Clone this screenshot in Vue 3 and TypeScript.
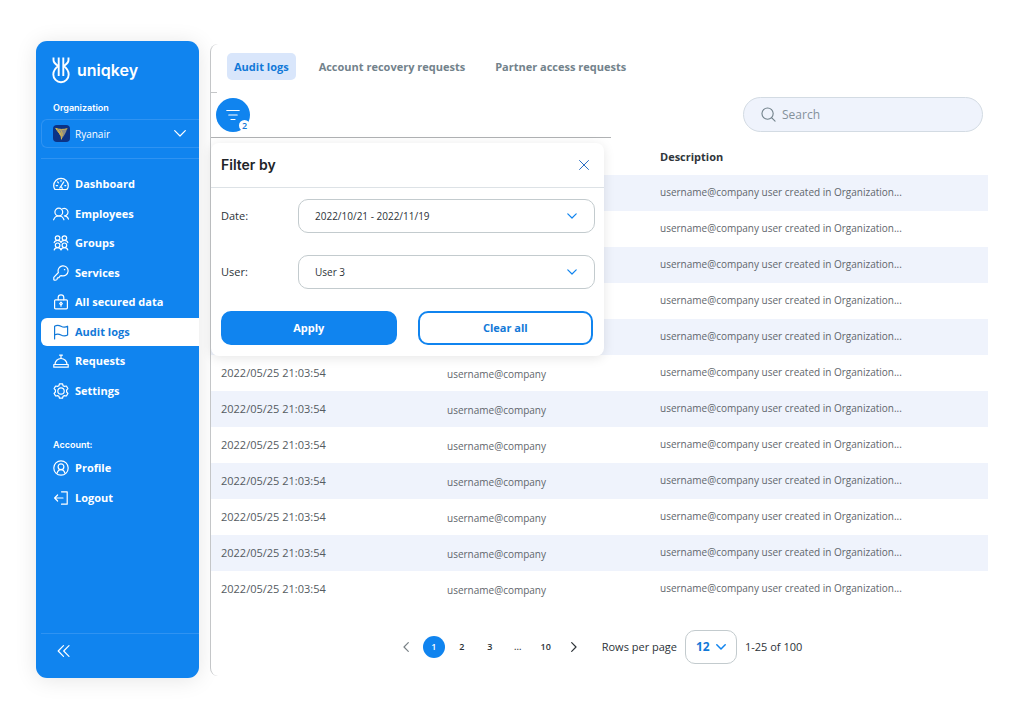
<script setup lang="ts">
import { ref } from 'vue'

interface MenuItem {
  label: string
  icon: string[]
}

interface LogRow {
  date: string
  user: string
  description: string
}

const menu: MenuItem[] = [
  {
    label: 'Dashboard',
    icon: [
      'M2 13.500C1.100 12.400.7 11.100.7 9.700a7.300 7.300 0 0 1 14.600 0c0 1.400-.4 2.700-1.300 3.800z',
      'M6.800 12 10.800 5.800M9.200 13.300c.2-1 0-1.800-.8-2.300M3.200 9.600h1.300M4.600 5.900l.8.900M8 4.300v1M11.800 9.600h1',
    ],
  },
  {
    label: 'Employees',
    icon: [
      'M5.800 10a3.900 3.900 0 1 0 0-7.800 3.900 3.900 0 0 0 0 7.800z',
      'M.6 13.800c.7-2.300 2.500-3.800 5.200-3.800s4.500 1.500 5.200 3.800',
      'M9.600 2.800a3.700 3.700 0 1 1 1.800 7c2 .1 3.400 1.300 4.100 3.300',
    ],
  },
  {
    label: 'Groups',
    icon: [
      'M4.600 5.400a2.300 2.300 0 1 0 0-4.600 2.300 2.300 0 0 0 0 4.600zM11.400 5.400a2.300 2.300 0 1 0 0-4.600 2.300 2.300 0 0 0 0 4.600z',
      'M1.200 7.600C1.600 6.200 2.800 5.400 4.600 5.400S7.600 6.200 8 7.600c.4-1.400 1.600-2.200 3.400-2.200s3 .8 3.400 2.200',
      'M4.600 12.600a2.300 2.300 0 1 0 0-4.600 2.300 2.300 0 0 0 0 4.600zM11.400 12.600a2.300 2.300 0 1 0 0-4.600 2.300 2.300 0 0 0 0 4.600z',
      'M1.200 15c.4-1.500 1.600-2.400 3.400-2.400S7.600 13.500 8 15c.4-1.500 1.600-2.400 3.400-2.400s3 .9 3.400 2.400',
    ],
  },
  {
    label: 'Services',
    icon: [
      'M5.400 7.500A5 5 0 1 1 8.700 10.600L7.200 10.900 5.900 12.600 4.500 12.900 3.900 14.500C3.200 15.400.7 15.600.8 14.300V12.300z',
      'M11.400 4.700h.4',
    ],
  },
  {
    label: 'All secured data',
    icon: [
      'M2.600 5.800h10.800q1 0 1 1v7q0 1-1 1H2.600q-1 0-1-1v-7q0-1 1-1z',
      'M5.200 5.800V3.600a2.800 2.800 0 0 1 5.600 0v2.200',
      'M8 8.200 9.300 9.700 8 11.200 6.700 9.700zM8 11.200v1',
    ],
  },
  {
    label: 'Audit logs',
    icon: ['M1.600 15V2.200c2.100-1.300 4.200-1.200 6.400 0s4.300 1.300 6.600 0v8.800c-2.300 1.300-4.400 1.200-6.600 0s-4.300-1.300-6.400 0'],
  },
  {
    label: 'Requests',
    icon: ['M2 11.500a6 6 0 0 1 12 0', 'M.8 11.500h14.400v2.700H.8z', 'M8 5.400V2.600M6.600 2.200h2.800'],
  },
  {
    label: 'Settings',
    icon: [
      'M6.500.8h3l.6 1.900 1.300.7 2-.4 1.500 2.600L13.600 7v2l1.300 1.400-1.500 2.600-2-.4-1.300.7-.6 1.900h-3l-.6-1.900-1.300-.7-2 .4-1.500-2.600L2.400 9V7L1.100 5.600 2.600 3l2 .4 1.300-.7z',
      'M8 11.200a3.200 3.200 0 1 0 0-6.400 3.200 3.200 0 0 0 0 6.400z',
    ],
  },
]

const account: MenuItem[] = [
  {
    label: 'Profile',
    icon: [
      'M8 15.200A7.200 7.200 0 1 0 8 .8a7.200 7.200 0 0 0 0 14.400z',
      'M8 9.600A2.900 2.900 0 1 0 8 3.800a2.900 2.900 0 0 0 0 5.800z',
      'M4.200 13c.5-2.100 1.900-3.400 3.800-3.400s3.300 1.300 3.800 3.400',
    ],
  },
  {
    label: 'Logout',
    icon: ['M8.500 1.800h5.700v12.400H8.500', 'M10 8H1.600M4.600 5 1.600 8l3 3'],
  },
]

const tabs = ['Audit logs', 'Account recovery requests', 'Partner access requests']
const pages = ['1', '2', '3', '...', '10']
const active = ref('Audit logs')
const activeTab = ref('Audit logs')
const page = ref('1')
const search = ref('')

const description = 'username@company user created in Organization...'
const rows: LogRow[] = Array.from({ length: 12 }, (_, i) => ({
  date: i < 5 ? '' : '2022/05/25 21:03:54',
  user: i < 5 ? '' : 'username@company',
  description,
}))
</script>

<template>
  <div class="page">
    <aside class="sidebar">
      <div class="brand">
        <svg class="brand-mark" viewBox="0 0 18 28" aria-hidden="true">
          <path d="M1.500 1.500v2.400c0 2.600 1.400 3.700 5.200 6.300M16.500 1.500v2.400c0 2.600-1.400 3.700-5.200 6.300" />
          <path d="M6.700 1.500V20M11.300 1.500V20" />
          <path d="M6.700 9.800C2.800 12.400 1.300 14.800 1.300 18.500a7.700 7.700 0 0 0 15.400 0c0-3.700-1.500-6.100-5.400-8.700" />
        </svg>
        <span class="brand-name">uniqkey</span>
      </div>

      <label class="side-label" for="organization">Organization</label>
      <div class="org">
        <svg class="org-logo" viewBox="0 0 17 17" aria-hidden="true">
          <rect width="17" height="17" rx="4" fill="#0b3285" />
          <path d="M3 3.500c3.500 1.200 7 1.200 11 .3-.8 3.600-2.700 6.900-5.500 10.200C8 10.500 5.500 8 3 3.500z" fill="#8d8c83" />
          <path d="M3 3.500c3.500 1.200 7 1.200 11 .3M3 3.500c1.500 3 3.500 4.500 4.300 6.200M5.500 5.500c2 2 2.800 4.500 3 8.500M8 5.500c1 1.500 1.300 3 1.200 5" fill="none" stroke="#d9b84b" stroke-width="1" />
        </svg>
        <select id="organization">
          <option>Ryanair</option>
        </select>
        <svg class="org-chevron" viewBox="0 0 12 7" aria-hidden="true"><path d="M.7.7 6 6 11.300.7" /></svg>
      </div>

      <nav class="menu main-menu" aria-label="Main">
        <a
          v-for="item in menu"
          :key="item.label"
          href="#"
          class="menu-item"
          :class="{ active: active === item.label }"
          @click.prevent="active = item.label"
        >
          <svg viewBox="0 0 16 16" aria-hidden="true"><path v-for="d in item.icon" :key="d" :d="d" /></svg>
          {{ item.label }}
        </a>
      </nav>

      <div class="side-label account-label">Account:</div>
      <nav class="menu account-menu" aria-label="Account">
        <a v-for="item in account" :key="item.label" href="#" class="menu-item" @click.prevent>
          <svg viewBox="0 0 16 16" aria-hidden="true"><path v-for="d in item.icon" :key="d" :d="d" /></svg>
          {{ item.label }}
        </a>
      </nav>

      <div class="side-foot">
        <button type="button" class="collapse" aria-label="Collapse menu">
          <svg viewBox="0 0 13 12" aria-hidden="true"><path d="M6.500.7 1.200 6l5.300 5.300M12 .7 6.700 6l5.300 5.300" /></svg>
        </button>
      </div>
    </aside>

    <main class="content">
      <nav class="tabs" aria-label="Sections">
        <button
          v-for="tab in tabs"
          :key="tab"
          type="button"
          class="tab"
          :class="{ active: activeTab === tab }"
          @click="activeTab = tab"
        >
          {{ tab }}
        </button>
      </nav>

      <div class="toolbar">
        <button type="button" class="filter-button" aria-label="Filters">
          <svg viewBox="0 0 14 12" aria-hidden="true"><path d="M.8 1.500h12.400M2.800 6h8.400M5 10.500h4" /></svg>
          <span class="badge">2</span>
        </button>
        <label class="search">
          <svg viewBox="0 0 16 16" aria-hidden="true"><circle cx="7" cy="7" r="6" /><path d="m11.500 11.500 3.500 3.500" /></svg>
          <input v-model="search" type="search" placeholder="Search" aria-label="Search" />
        </label>
      </div>

      <section class="records">
        <table>
          <colgroup>
            <col class="col-date" />
            <col class="col-user" />
            <col />
          </colgroup>
          <thead>
            <tr>
              <td></td>
              <td></td>
              <th scope="col">Description</th>
            </tr>
          </thead>
          <tbody>
            <tr v-for="(row, i) in rows" :key="i">
              <td class="date">{{ row.date }}</td>
              <td class="user">{{ row.user }}</td>
              <td class="desc">{{ row.description }}</td>
            </tr>
          </tbody>
        </table>

        <form class="popover" @submit.prevent>
          <header class="popover-head">
            <h2>Filter by</h2>
            <button type="button" class="close" aria-label="Close">
              <svg viewBox="0 0 10 10" aria-hidden="true"><path d="m.5.5 9 9M9.500.5l-9 9" /></svg>
            </button>
          </header>
          <div class="popover-body">
            <div class="field">
              <label for="date">Date:</label>
              <div class="select">
                <select id="date">
                  <option>2022/10/21 - 2022/11/19</option>
                </select>
                <svg viewBox="0 0 10 6" aria-hidden="true"><path d="M.8.8 5 5 9.200.8" /></svg>
              </div>
            </div>
            <div class="field">
              <label for="user">User:</label>
              <div class="select">
                <select id="user">
                  <option>User 3</option>
                </select>
                <svg viewBox="0 0 10 6" aria-hidden="true"><path d="M.8.8 5 5 9.200.8" /></svg>
              </div>
            </div>
            <div class="actions">
              <button type="submit" class="primary">Apply</button>
              <button type="reset" class="secondary">Clear all</button>
            </div>
          </div>
        </form>
      </section>

      <footer class="pager">
        <div class="pages">
          <button type="button" class="page-button prev" aria-label="Previous page">
            <svg viewBox="0 0 6 10" aria-hidden="true"><path d="M5.300.7 1 5l4.300 4.300" /></svg>
          </button>
          <template v-for="p in pages" :key="p">
            <span v-if="p === '...'" class="page-button">...</span>
            <button v-else type="button" class="page-button" :class="{ current: page === p }" @click="page = p">{{ p }}</button>
          </template>
          <button type="button" class="page-button next" aria-label="Next page">
            <svg viewBox="0 0 6 10" aria-hidden="true"><path d="M.7.7 5 5 .7 9.300" /></svg>
          </button>
        </div>
        <label for="per-page">Rows per page</label>
        <div class="per-page">
          <select id="per-page">
            <option>12</option>
          </select>
          <svg viewBox="0 0 10 6" aria-hidden="true"><path d="M.8.8 5 5 9.200.8" /></svg>
        </div>
        <span>1-25 of 100</span>
      </footer>
    </main>
  </div>
</template>

<style>
body {
  background: #fff;
}
</style>

<style scoped>
.page,
.page * {
  box-sizing: border-box;
}

.page {
  display: flex;
  gap: 11px;
  min-height: 100vh;
  padding: 41px 36px 42px;
  font-family: 'Open Sans', 'Noto Sans', sans-serif;
  font-size: 11px;
  line-height: 16px;
  color: #2d3338;
}

button,
select,
input {
  margin: 0;
  padding: 0;
  border: 0;
  background: none;
  color: inherit;
  font: inherit;
}

select {
  appearance: none;
}

svg {
  flex: none;
  fill: none;
  stroke: currentColor;
  stroke-width: 1.2;
  stroke-linecap: round;
  stroke-linejoin: round;
}

.sidebar {
  display: flex;
  flex: 0 0 163px;
  flex-direction: column;
  border-radius: 11px;
  background: #1084ef;
  box-shadow: 0 2px 22px rgba(0, 0, 0, 0.1);
  color: #fff;
}

.brand {
  display: flex;
  align-items: center;
  gap: 7px;
  margin: 15px 0 0 16px;
}

.brand-mark {
  width: 18px;
  height: 28px;
  stroke-width: 1.9;
  stroke-linecap: butt;
}

.brand-name {
  font-family: Inter, sans-serif;
  font-size: 16px;
  font-weight: 600;
  line-height: 24px;
}

.side-label {
  margin: 17px 0 0 17px;
  font-family: Inter, sans-serif;
  font-size: 9px;
  font-weight: 600;
  line-height: 14px;
}

.org {
  display: flex;
  align-items: center;
  height: 29px;
  margin: 4px 0 0 5px;
  padding: 0 13px 0 11px;
  border: 1px solid #2f93f2;
  border-right: 0;
  border-radius: 6px 0 0 6px;
}

.org-logo {
  width: 17px;
  height: 17px;
  margin-right: 5px;
  stroke: none;
}

.org select {
  flex: 1;
  min-width: 0;
  font-size: 10px;
}

.org-chevron {
  width: 12px;
  height: 7px;
  pointer-events: none;
}

.menu {
  display: flex;
  flex-direction: column;
  justify-content: space-between;
  margin-left: 5px;
}

.main-menu {
  height: 247px;
  margin-top: 10px;
  padding-top: 11px;
  border-top: 1px solid #2f93f2;
}

.menu-item {
  display: flex;
  align-items: center;
  gap: 6px;
  height: 28px;
  padding-left: 12px;
  border-radius: 6px 0 0 6px;
  color: #fff;
  font-weight: 700;
  text-decoration: none;
}

.menu-item svg {
  width: 16px;
  height: 16px;
}

.menu-item.active {
  background: #fff;
  color: #1279d8;
}

.account-label {
  margin-top: 33px;
}

.account-menu {
  height: 58px;
  margin-top: 2px;
}

.side-foot {
  margin: auto 0 0 5px;
  padding: 9px 15px 19px;
  border-top: 1px solid #2f93f2;
}

.collapse {
  display: flex;
  align-items: center;
  height: 16px;
}

.collapse svg {
  width: 15px;
  height: 12px;
}

.content {
  display: flex;
  flex: 1;
  flex-direction: column;
  min-width: 0;
  margin: 3px 0 2px;
  border-left: 1px solid #c4c6c8;
  border-radius: 8px 0 0 8px;
  background: #fff;
}

.tabs {
  display: flex;
  gap: 16px;
  padding: 9px 16px 0;
}

.tab {
  height: 27px;
  padding: 0 7px;
  border-radius: 5px;
  color: #72828b;
  font-weight: 700;
}

.tab.active {
  background: #d9e6fb;
  color: #1279d8;
}

.toolbar {
  display: flex;
  align-items: center;
  justify-content: space-between;
  padding: 17px 5px 5px;
  background: linear-gradient(#c4c6c8, #c4c6c8) 0 12px / 6px 1px no-repeat;
}

.filter-button {
  position: relative;
  display: grid;
  place-items: center;
  width: 34px;
  height: 34px;
  border-radius: 50%;
  background: #1084ef;
  color: #fff;
}

.filter-button svg {
  width: 14px;
  height: 12px;
}

.badge {
  position: absolute;
  right: 0;
  bottom: 1px;
  width: 11px;
  height: 11px;
  border-radius: 50%;
  background: #fff;
  color: #1279d8;
  font-size: 9px;
  font-weight: 600;
  line-height: 11px;
  text-align: center;
}

.search {
  display: flex;
  align-items: center;
  gap: 6px;
  width: 240px;
  height: 35px;
  padding: 0 17px;
  border: 1px solid #d3dbe3;
  border-radius: 18px;
  background: #eff3fc;
  color: #72828b;
}

.search svg {
  width: 15px;
  height: 15px;
}

.search input {
  flex: 1;
  min-width: 0;
  outline: 0;
  font-size: 12px;
}

.search input::placeholder {
  color: #84919b;
  opacity: 1;
}

.records {
  position: relative;
}

.records::before {
  content: '';
  display: block;
  width: 400px;
  height: 1px;
  background: #b0b2b4;
}

table {
  width: 100%;
  border-collapse: collapse;
  table-layout: fixed;
}

.col-date {
  width: 226px;
}

.col-user {
  width: 213px;
}

th,
td {
  padding: 0 10px;
  text-align: left;
}

thead tr {
  height: 37px;
}

th {
  color: #30363b;
  font-weight: 700;
}

tbody tr {
  height: 36px;
}

tbody tr:nth-child(odd) {
  background: #eff3fc;
}

.date {
  color: #545b61;
}

.user,
.desc {
  color: #5f666c;
  font-size: 10px;
}

.user {
  padding-top: 2px;
}

.desc {
  padding-bottom: 2px;
}

.popover {
  position: absolute;
  top: 6px;
  left: 0;
  width: 393px;
  border-radius: 8px;
  background: #fff;
  box-shadow: 0 2px 12px rgba(0, 0, 0, 0.1);
}

.popover-head {
  display: flex;
  align-items: center;
  justify-content: space-between;
  height: 45px;
  padding: 0 15px 0 10px;
  border-bottom: 1px solid #dde2e6;
}

h2 {
  margin: 0;
  color: #202428;
  font-family: Inter, sans-serif;
  font-size: 14px;
  font-weight: 600;
}

.close {
  display: flex;
  color: #2b6fc4;
}

.close svg {
  width: 10px;
  height: 10px;
  stroke-width: 1;
}

.popover-body {
  display: grid;
  gap: 22px;
  padding: 11px 9px 11px 10px;
}

.field {
  display: grid;
  grid-template-columns: 77px 1fr;
  align-items: center;
}

.select,
.per-page {
  position: relative;
  display: flex;
  align-items: center;
  height: 34px;
  border: 1px solid #c3cbce;
  border-radius: 10px;
}

.select select {
  width: 100%;
  height: 100%;
  padding: 0 32px 0 16px;
  font-size: 10px;
}

.select svg,
.per-page svg {
  position: absolute;
  right: 17px;
  width: 10px;
  height: 6px;
  color: #1084ef;
  pointer-events: none;
}

.actions {
  display: grid;
  grid-template-columns: 1fr 1fr;
  gap: 21px;
  padding-right: 2px;
}

.actions button {
  height: 34px;
  border: 2px solid #1084ef;
  border-radius: 10px;
  font-weight: 700;
}

.primary {
  background: #1084ef;
  color: #fff;
}

.secondary {
  color: #1279d8;
}

.pager {
  display: flex;
  align-items: center;
  justify-content: center;
  gap: 8px;
  margin-top: 23px;
  padding-right: 2px;
}

.pages {
  display: flex;
  align-items: center;
  gap: 6px;
  margin-right: 9px;
}

.page-button {
  display: grid;
  place-items: center;
  width: 22px;
  height: 22px;
  border-radius: 50%;
  font-size: 9px;
  font-weight: 600;
}

.page-button svg {
  width: 6px;
  height: 10px;
}

.prev {
  color: #7a8287;
}

.current {
  background: #1084ef;
  color: #fff;
}

.per-page {
  width: 52px;
  color: #1279d8;
}

.per-page select {
  width: 100%;
  height: 100%;
  padding-left: 10px;
  font-size: 12px;
  font-weight: 700;
}

.per-page svg {
  right: 10px;
  stroke-width: 1.5;
}
</style>
